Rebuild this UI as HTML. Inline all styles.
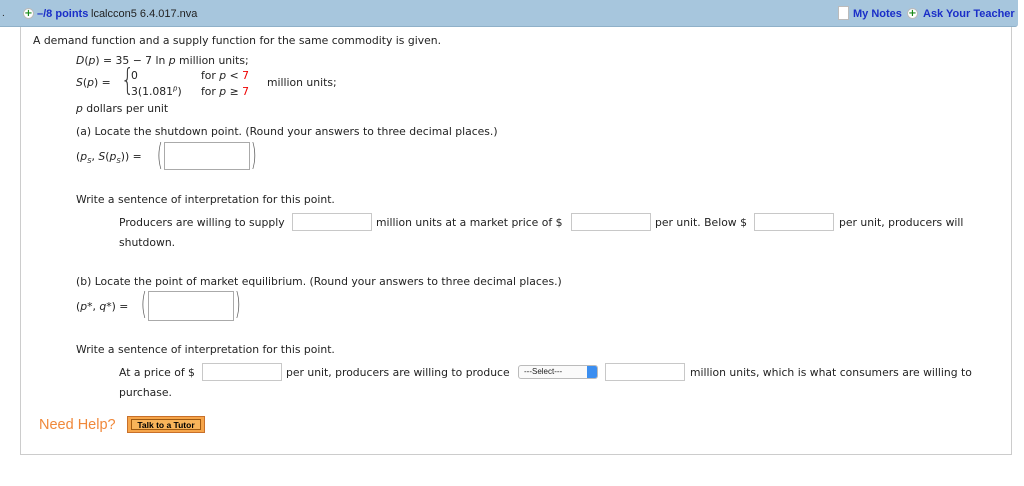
<!DOCTYPE html>
<html><head><meta charset="utf-8"><style>
body{margin:0;width:1024px;height:486px;background:#fff;position:relative;overflow:hidden;font-family:"DejaVu Sans",Verdana,sans-serif;font-size:10.8px;color:#222}
.a{position:absolute;white-space:nowrap;line-height:12px}
.bar{position:absolute;left:0;top:0;width:1018px;height:26px;background:#a7c6dd;border-bottom:1px solid #8fb0c8;border-radius:0 0 3px 0}
.box{position:absolute;left:20px;top:27px;width:990px;height:427px;border:1px solid #ccc;border-top:none}
.in{position:absolute;border:1px solid #c8c8c8;background:#fff;height:16px}
.big{position:absolute;border:1px solid #aaa;background:#fff}
.l{font-family:"Liberation Sans",Arial,sans-serif}
.i{font-style:italic}
.r{color:#e00}
.paren{position:absolute;font-size:30px;line-height:30px;font-weight:100;color:#555;font-family:"DejaVu Sans",sans-serif;transform:scaleX(.5)}
</style></head><body>
<div class="bar"></div>
<div class="a l" style="left:2px;top:8px;font-size:10px">.</div>
<div class="a" style="left:23px;top:8px;width:11px;height:11px;border-radius:50%;background:#fff;border:1px solid #bbb;box-sizing:border-box;color:#1a8a1a;font-size:10px;line-height:9px;text-align:center;font-weight:bold">+</div>
<div class="a l" style="left:37px;top:8px;font-size:11px;color:#1a2ec8;font-weight:bold">–/8 points</div>
<div class="a l" style="left:91px;top:8px;font-size:11px;color:#222">lcalccon5 6.4.017.nva</div>
<div class="a" style="left:838px;top:6px;width:9px;height:12px;background:#fff;border:1px solid #bbb"></div>
<div class="a l" style="left:853px;top:8px;font-size:11px;color:#1a2ec8;font-weight:bold">My Notes</div>
<div class="a" style="left:907px;top:8px;width:11px;height:11px;border-radius:50%;background:#fff;border:1px solid #bbb;box-sizing:border-box;color:#1a8a1a;font-size:10px;line-height:9px;text-align:center;font-weight:bold">+</div>
<div class="a l" style="left:923px;top:8px;font-size:11px;color:#1a2ec8;font-weight:bold">Ask Your Teacher</div>
<div class="box"></div>

<div class="a" style="left:33px;top:35px">A demand function and a supply function for the same commodity is given.</div>
<div class="a" style="left:76px;top:55px"><span class="i">D</span>(<span class="i">p</span>) = 35 − 7 ln <span class="i">p</span> million units;</div>
<div class="a" style="left:76px;top:77px"><span class="i">S</span>(<span class="i">p</span>) =</div>
<div class="a" style="left:118px;top:66px;font-size:30px;line-height:30px;font-weight:100;color:#333;transform:scaleX(.7)">{</div>
<div class="a" style="left:131px;top:70px">0</div>
<div class="a" style="left:131px;top:86px">3(1.081<sup style="font-size:7px;line-height:0" class="i">p</sup>)</div>
<div class="a" style="left:201px;top:70px">for <span class="i">p</span> &lt; <span class="r">7</span></div>
<div class="a" style="left:201px;top:86px">for <span class="i">p</span> ≥ <span class="r">7</span></div>
<div class="a" style="left:267px;top:77px">million units;</div>
<div class="a" style="left:76px;top:103px"><span class="i">p</span> dollars per unit</div>
<div class="a" style="left:76px;top:126px">(a) Locate the shutdown point. (Round your answers to three decimal places.)</div>
<div class="a" style="left:76px;top:151px">(<span class="i">p<sub style="font-size:7px;line-height:0">S</sub></span>, <span class="i">S</span>(<span class="i">p<sub style="font-size:7px;line-height:0">S</sub></span>)) =</div>
<div class="paren" style="left:154px;top:141px">(</div>
<div class="big" style="left:164px;top:142px;width:84px;height:26px"></div>
<div class="paren" style="left:248px;top:141px">)</div>

<div class="a" style="left:76px;top:194px">Write a sentence of interpretation for this point.</div>
<div class="a" style="left:119px;top:217px">Producers are willing to supply</div>
<div class="in" style="left:292px;top:213px;width:78px"></div>
<div class="a" style="left:376px;top:217px">million units at a market price of $</div>
<div class="in" style="left:571px;top:213px;width:78px"></div>
<div class="a" style="left:655px;top:217px">per unit. Below $</div>
<div class="in" style="left:754px;top:213px;width:78px"></div>
<div class="a" style="left:839px;top:217px">per unit, producers will</div>
<div class="a" style="left:119px;top:237px">shutdown.</div>

<div class="a" style="left:76px;top:276px">(b) Locate the point of market equilibrium. (Round your answers to three decimal places.)</div>
<div class="a" style="left:76px;top:301px">(<span class="i">p</span>*, <span class="i">q</span>*) =</div>
<div class="paren" style="left:138px;top:290px">(</div>
<div class="big" style="left:148px;top:291px;width:84px;height:28px"></div>
<div class="paren" style="left:232px;top:290px">)</div>

<div class="a" style="left:76px;top:344px">Write a sentence of interpretation for this point.</div>
<div class="a" style="left:119px;top:367px">At a price of $</div>
<div class="in" style="left:202px;top:363px;width:78px"></div>
<div class="a" style="left:286px;top:367px">per unit, producers are willing to produce</div>
<div class="a l" style="left:518px;top:365px;width:80px;height:14px;border:1px solid #bbb;border-radius:3px;box-sizing:border-box;font-size:8px;line-height:12px;padding-left:5px;background:#fafafa">---Select---<span style="position:absolute;right:0;top:0;width:10px;height:12px;background:#3b8ef0;border-radius:0 2px 2px 0"></span></div>
<div class="in" style="left:605px;top:363px;width:78px"></div>
<div class="a" style="left:690px;top:367px">million units, which is what consumers are willing to</div>
<div class="a" style="left:119px;top:387px">purchase.</div>

<div class="a l" style="left:39px;top:417px;font-size:14.5px;line-height:16px;color:#f0883a">Need Help?</div>
<div class="a l" style="left:127px;top:416px;width:78px;height:17px;border:1px solid #c8702a;background:#f6a54a;box-sizing:border-box"><div style="position:absolute;left:3px;top:2px;right:3px;bottom:2px;background:#f9b45a;border:1px solid #a05a10;font-size:8.5px;font-weight:bold;color:#000;text-align:center;line-height:10px">Talk to a Tutor</div></div>
</body></html>
